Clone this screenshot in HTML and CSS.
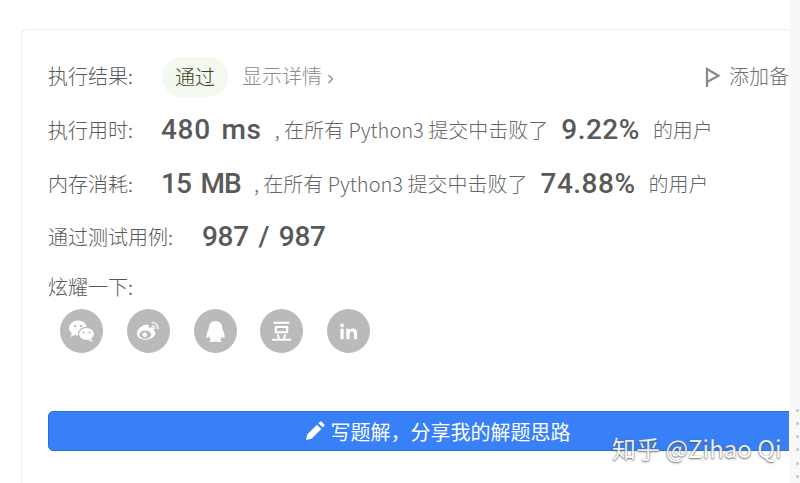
FILE: index.html
```html
<!DOCTYPE html>
<html lang="zh-CN">
<head>
  <meta charset="UTF-8">
  <title>执行结果</title>
  <link rel="stylesheet" href="styles.css">
</head>
<body>
  <div class="page">
    <div class="card">
      <div class="row row-result">
        <span class="label label-result">执行结果:</span>
        <span class="badge">通过</span>
        <span class="details">显示详情
          <svg class="chevron" width="7" height="10" viewBox="0 0 7 10"><path d="M1.500 1l4 4-4 4" fill="none" stroke="#8c8c8c" stroke-width="1.300"/></svg>
        </span>
        <span class="note">
          <svg width="16" height="21" viewBox="0 0 16 21"><path d="M2 20V2l11.500 6.800L2 15" fill="none" stroke="#8a8a8a" stroke-width="2.200"/></svg>
          <span>添加备</span>
        </span>
      </div>
      <div class="row row-time">
        <span class="label label-stat">执行用时:</span>
        <span class="num num-main num-time">480 ms</span>
        <span class="text">, 在所有 Python3 提交中击败了</span>
        <span class="num num-pct">9.22%</span>
        <span class="text">的用户</span>
      </div>
      <div class="row row-mem">
        <span class="label label-stat">内存消耗:</span>
        <span class="num num-main num-mem">15 MB</span>
        <span class="text">, 在所有 Python3 提交中击败了</span>
        <span class="num num-pct">74.88%</span>
        <span class="text">的用户</span>
      </div>
      <div class="row row-cases">
        <span class="label label-cases">通过测试用例:</span>
        <span class="num">987 / 987</span>
      </div>
      <div class="share-title">炫耀一下:</div>
      <div class="share">
        <span class="share-btn">
          <svg width="28" height="24" viewBox="0 0 28 24" fill="#fff">
            <ellipse cx="10" cy="9" rx="9" ry="7.500"/>
            <path d="M4 13l-1 5 5-3z"/>
            <ellipse cx="18.500" cy="15" rx="8" ry="6.600" stroke="#bababa" stroke-width="1.200"/>
            <path d="M23 20l2 3-5-2z"/>
            <circle cx="7" cy="7" r="1.200" fill="#bababa"/><circle cx="13" cy="7" r="1.200" fill="#bababa"/>
            <circle cx="15.500" cy="13.500" r="1" fill="#bababa"/><circle cx="21.500" cy="13.500" r="1" fill="#bababa"/>
          </svg>
        </span>
        <span class="share-btn">
          <svg width="26" height="22" viewBox="0 0 28 24" fill="none">
            <path d="M2 15c0-5 6-10 11-10 2 0 2 2 1.500 3.500 3-1 6-1 6 1.500 0 1-.5 1.500-.5 1.500 2 .5 2 2 2 3 0 4-6 7-11 7S2 19 2 15z" fill="#fff"/>
            <ellipse cx="11" cy="16" rx="6.500" ry="4.500" fill="#bababa"/>
            <circle cx="10.500" cy="16" r="2.500" fill="#fff"/>
            <path d="M18 3c4-.8 7.500 2.500 7 7M18 6.500c2-.4 4 1 3.700 3.500" stroke="#fff" stroke-width="1.500"/>
          </svg>
        </span>
        <span class="share-btn">
          <svg width="23" height="25" viewBox="0 0 26 28" fill="#fff">
            <path d="M13 2c5 0 7.500 3.500 7.500 7.500 0 2 1 3 2 5.500 1 3 1 6 .5 6.500-.8.300-2-1-2.500-2-.5 1.500-1 3-2.500 4 1.500.5 2 1 2 1.500 0 1-3 1-5 .5-1-.3-1.500-.3-2-.3s-1 0-2 .3c-2 .5-5 .5-5-.5 0-.5.5-1 2-1.500-1.500-1-2-2.500-2.500-4-.5 1-1.700 2.300-2.500 2-.5-.5-.5-3.500.5-6.500 1-2.500 2-3.500 2-5.500C5.500 5.500 8 2 13 2z"/>
          </svg>
        </span>
        <span class="share-btn">
          <svg width="21" height="22" viewBox="0 0 24 24" fill="none" stroke="#fff" stroke-width="2.400">
            <path d="M3 2.500h18M5.500 7.500h13v6h-13zM7.500 16l1.800 5M16.500 16l-1.800 5M1 22h22"/>
          </svg>
        </span>
        <span class="share-btn">
          <svg width="18" height="17" viewBox="0 0 20 18" fill="#fff">
            <rect x="0.500" y="6" width="3.600" height="11.500"/>
            <circle cx="2.300" cy="2.300" r="2.100"/>
            <path d="M7 6h3.400v1.700C11 6.500 12.500 5.700 14.300 5.700c3.500 0 4.700 2.200 4.700 5.500v6.300h-3.600v-5.600c0-1.600-.4-2.900-2-2.900-1.700 0-2.800 1.200-2.800 3v5.500H7z"/>
          </svg>
        </span>
      </div>
      <button class="write-btn">
        <svg width="20" height="20" viewBox="0 0 20 20" fill="#fff"><path d="M1 19l1.200-5.500L12 3.700l4.300 4.300-9.800 9.800zM13.400 2.300l1.300-1.300c.6-.6 1.500-.6 2.100 0l2.200 2.200c.6.600.6 1.500 0 2.100l-1.300 1.300z"/></svg>
        <span>写题解，分享我的解题思路</span>
      </button>
    </div>
    <div class="scroll-strip">
      <i></i><i></i><i></i><i></i><i></i><i></i>
    </div>
  </div>
  <div class="watermark">知乎 @Zihao Qi</div>
</body>
</html>
```

FILE: styles.css
```css
html, body {
  margin: 0;
  padding: 0;
  height: 100%;
  overflow: hidden;
  background: #fff;
}
body {
  font-family: "Noto Sans CJK SC", "Noto Sans", sans-serif;
  font-weight: 300;
  color: #595959;
}
.page {
  display: flex;
  height: 483px;
  padding: 29px 0 0 21px;
  box-sizing: border-box;
  overflow: hidden;
}
.card {
  width: 768px;
  flex: none;
  height: 480px;
  box-sizing: border-box;
  padding: 27px 0 0 26px;
  border: 1px solid #ededed;
  border-right: none;
  border-radius: 6px 0 0 0;
  overflow: hidden;
  position: relative;
}
.row {
  display: flex;
  align-items: center;
  font-size: 20px;
  white-space: nowrap;
}
.row-result {
  height: 40px;
}
.row-time {
  height: 40px;
  margin-top: 12px;
}
.row-mem {
  height: 40px;
  margin-top: 14px;
}
.row-cases {
  height: 40px;
  margin-top: 13px;
}
.label {
  flex: none;
}
.label-result {
  width: 114px;
  margin-bottom: 3px;
}
.label-stat { width: 113px; }
.label-cases { width: 154px; }
.badge {
  width: 66px;
  height: 40px;
  line-height: 40px;
  border-radius: 20px;
  background: #f4f9f0;
  color: #2f4a1e;
  text-align: center;
}
.details {
  margin: 0 0 3px 14px;
  color: #8c8c8c;
}
.chevron {
  margin-left: 1px;
}
.note {
  display: flex;
  align-items: center;
  gap: 8px;
  position: absolute;
  left: 683px;
  color: #6f6f6f;
}
.note span {
  margin-bottom: 3px;
}
.num {
  font-family: "Roboto", sans-serif;
  font-weight: 500;
  font-size: 28px;
  letter-spacing: -0.3px;
  word-spacing: 3px;
  white-space: pre;
  color: #595959;
}
.num-main {
  margin-right: 13px;
}
.num-time { letter-spacing: 0.7px; }
.num-mem { letter-spacing: -0.8px; }
.num-pct {
  margin: 0 13px;
  letter-spacing: 0.5px;
}
.text {
  color: #666;
}
.share-title {
  font-size: 20px;
  line-height: 28px;
  margin-top: 17px;
}
.share {
  display: flex;
  gap: 23.750px;
  margin: 8px 0 0 12px;
}
.share-btn {
  width: 43px;
  height: 44px;
  border-radius: 50%;
  background: #bababa;
  display: flex;
  align-items: center;
  justify-content: center;
}
.write-btn {
  display: flex;
  align-items: center;
  justify-content: center;
  gap: 6px;
  width: 745px;
  height: 40px;
  margin-top: 58px;
  padding: 0 0 0 34px;
  border: 1px solid #2f6fdc;
  border-radius: 5px;
  background: #3880f8;
  color: #fff;
  font-family: "Noto Sans CJK SC", sans-serif;
  font-size: 20px;
  font-weight: 400;
}
.write-btn span {
  margin-top: 1px;
}
.scroll-strip {
  flex: 1;
  margin-top: -29px;
  background: #f8f8f8;
  display: flex;
  flex-direction: column;
  justify-content: flex-end;
  align-items: flex-end;
  gap: 10.300px;
  padding: 0 1px 5px 0;
}
.scroll-strip i {
  width: 3px;
  height: 3px;
  background: #c4c4c4;
  border-radius: 50%;
}
.watermark {
  position: absolute;
  left: 612px;
  top: 430px;
  font-size: 24px;
  font-weight: 400;
  color: #fff;
  opacity: 0.85;
  text-shadow: 0 0 1px #555, 0 1px 2px #555;
  white-space: nowrap;
}
```
